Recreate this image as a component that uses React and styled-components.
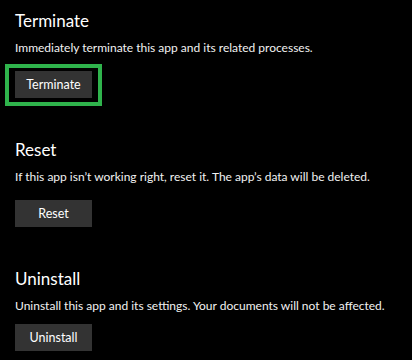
import React from "react";
import styled, { createGlobalStyle, css } from "styled-components";

const GlobalStyle = createGlobalStyle`
  html, body {
    margin: 0;
    padding: 0;
    background: #000;
  }
  body {
    font-family: Lato, "Open Sans", sans-serif;
    color: #fff;
  }
`;

const Page = styled.div`
  width: 412px;
  height: 360px;
  overflow: hidden;
  background: #000;
  padding: 10px 0 0 15px;
  box-sizing: border-box;
`;

const Section = styled.section`
  display: flex;
  flex-direction: column;
  align-items: flex-start;
  margin-bottom: 41px;
`;

const Title = styled.h2`
  margin: 0;
  font-size: 17px;
  font-weight: 400;
  line-height: 22px;
`;

const Description = styled.p`
  margin: 8px 0 0;
  font-size: 12px;
  line-height: 16px;
  color: #f2f2f2;
`;

const Button = styled.button`
  position: relative;
  display: block;
  width: 77px;
  height: 27px;
  margin-top: ${props => props.$gap}px;
  background: #333;
  border: none;
  color: #fff;
  font-family: inherit;
  font-size: 12.5px;
  padding: 0;

  /* keyboard focus ring */
  ${props =>
    props.$focused &&
    css`
      &::after {
        content: "";
        position: absolute;
        top: -7px;
        bottom: -8px;
        left: -10px;
        right: -10px;
        border: 4px solid #2fb34c;
      }
    `}
`;

const items = [
  {
    title: "Terminate",
    text: "Immediately terminate this app and its related processes.",
    focused: true,
    gap: 15,
  },
  {
    title: "Reset",
    text: "If this app isn’t working right, reset it. The app’s data will be deleted.",
    gap: 15,
  },
  {
    title: "Uninstall",
    text: "Uninstall this app and its settings. Your documents will not be affected.",
    gap: 10,
  },
];

const App = () => {
  return (
    <Page>
      <GlobalStyle />
      {items.map(item => (
        <Section key={item.title}>
          <Title>{item.title}</Title>
          <Description>{item.text}</Description>
          <Button $gap={item.gap} $focused={item.focused}>
            {item.title}
          </Button>
        </Section>
      ))}
    </Page>
  );
};

export default App;
